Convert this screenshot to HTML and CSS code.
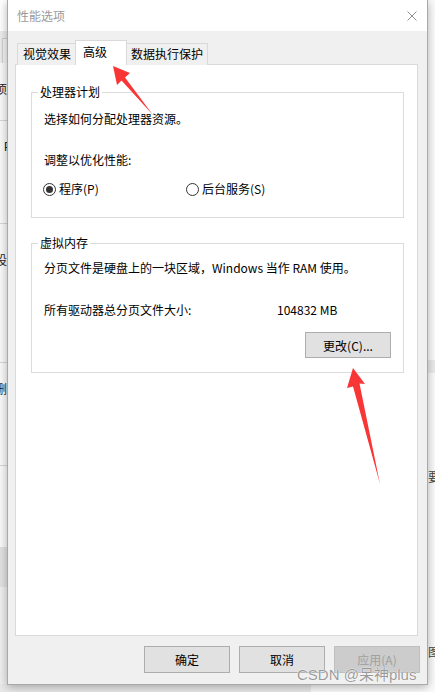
FILE: index.html
```html
<!DOCTYPE html>
<html lang="zh-CN">
<head>
<meta charset="utf-8">
<title>性能选项</title>
<link rel="stylesheet" href="styles.css">
</head>
<body>
<div class="screen">
  <div class="backdrop">
    <div class="bd bd-left-top"></div>
    <div class="bd bd-left-head"></div>
    <div class="bd bd-left-tab"></div>
    <div class="bd bd-left-body"></div>
    <div class="bd bd-line bd-line-1"></div>
    <div class="bd bd-line bd-line-2"></div>
    <div class="bd bd-line bd-line-3"></div>
    <div class="bd bd-line bd-line-4"></div>
    <div class="bd bd-left-band"></div>
    <div class="bd bd-left-foot"></div>
    <div class="bd bd-right-band"></div>
    <div class="bd bd-bottom-left"></div>
    <span class="bd bd-char ch-1">项</span>
    <span class="bd bd-char ch-2">P</span>
    <span class="bd bd-char ch-3">设</span>
    <span class="bd bd-char ch-4">删</span>
    <span class="bd bd-char ch-5">要</span>
    <span class="bd bd-char ch-6">图</span>
  </div>

  <div class="dialog">
    <div class="titlebar">
      <span class="title">性能选项</span>
      <svg class="close" viewBox="0 0 10 10" width="10" height="10" aria-hidden="true">
        <path d="M0.5 0.5 L9.5 9.5 M9.5 0.5 L0.5 9.5" stroke="#8e8e8e" stroke-width="1" fill="none"/>
      </svg>
    </div>
    <div class="tabs">
      <div class="tab tab-1">视觉效果</div>
      <div class="tab tab-2">高级</div>
      <div class="tab tab-3">数据执行保护</div>
    </div>
    <div class="panel">
      <fieldset class="group group-cpu">
        <legend>处理器计划</legend>
        <p class="line">选择如何分配处理器资源。</p>
        <p class="line line-gap">调整以优化性能:</p>
        <div class="radios">
          <label class="radio r1"><span class="dot checked"></span>程序(P)</label>
          <label class="radio r2"><span class="dot"></span>后台服务(S)</label>
        </div>
      </fieldset>
      <fieldset class="group group-vm">
        <legend>虚拟内存</legend>
        <p class="line">分页文件是硬盘上的一块区域，Windows 当作 RAM 使用。</p>
        <div class="line size-row"><span class="size-label">所有驱动器总分页文件大小:</span><span>104832 MB</span></div>
        <div class="btn-row"><button class="btn btn-change">更改(C)...</button></div>
      </fieldset>
    </div>
    <div class="footer">
      <button class="btn">确定</button>
      <button class="btn">取消</button>
      <button class="btn disabled">应用(A)</button>
    </div>
  </div>

  <svg class="arrows" viewBox="0 0 435 692" width="435" height="692" aria-hidden="true">
    <polygon points="113,66 117,85 121.5,80.5 153,115 125,77.5 130,73" fill="#f93636"/>
    <polygon points="353,368 365,384 359.5,383.5 380,484 353,386.5 347,388" fill="#f93636"/>
  </svg>
  <div class="watermark">CSDN @呆神plus</div>
</div>
</body>
</html>
```

FILE: styles.css
```css
* { box-sizing: border-box; }

html, body {
  margin: 0;
  padding: 0;
}

body {
  width: 435px;
  height: 692px;
  overflow: hidden;
  font-family: "Noto Sans CJK SC", "Noto Sans", sans-serif;
  font-size: 12px;
  color: #000;
}

.screen {
  position: relative;
  width: 435px;
  height: 692px;
  overflow: hidden;
  background: #fbfbfb;
}

/* window behind the dialog */
.backdrop { position: absolute; inset: 0; }
.bd { position: absolute; }
.bd-left-top { left: 0; top: 0; width: 8px; height: 31px; background: #ffffff; }
.bd-left-head { left: 0; top: 31px; width: 8px; height: 32px; background: #ececec; }
.bd-left-tab { left: 2px; top: 38px; width: 10px; height: 26px; border: 1px solid #cfcfcf; background: #f4f4f4; }
.bd-left-body { left: 0; top: 63px; width: 8px; height: 484px; background: #fafafa; }
.bd-line { left: 0; width: 8px; height: 1px; background: #d6d6d6; }
.bd-line-1 { top: 120px; }
.bd-line-2 { top: 223px; }
.bd-line-3 { top: 362px; }
.bd-line-4 { top: 465px; }
.bd-left-band { left: 0; top: 547px; width: 8px; height: 40px; background: #e2e2e2; }
.bd-left-foot { left: 0; top: 587px; width: 8px; height: 105px; background: #efefef; }
.bd-right-band { left: 428px; top: 360px; width: 7px; height: 13px; background: #ebebeb; }
.bd-bottom-left { left: 0; top: 684px; width: 311px; height: 8px; background: #e9e9e9; }
.bd-char { line-height: 16px; color: #222; }
.ch-1 { left: -5px; top: 81px; }
.ch-2 { left: 4px; top: 139px; font-family: "Liberation Sans", sans-serif; }
.ch-3 { left: -5px; top: 252px; }
.ch-4 { left: -5px; top: 381px; }
.ch-5 { left: 428px; top: 469px; color: #444; }
.ch-6 { left: 428px; top: 644px; color: #444; }

/* dialog */
.dialog {
  position: relative;
  z-index: 1;
  margin-left: 7px;
  width: 421px;
  height: 685px;
  border: 1px solid #a9a9a9;
  border-top: none;
  background: #f0f0f0;
  box-shadow: 0 2px 9px rgba(0, 0, 0, 0.3);
  display: flex;
  flex-direction: column;
}

.titlebar {
  height: 31px;
  flex: none;
  background: #fff;
  display: flex;
  align-items: center;
  justify-content: space-between;
  padding: 0 10px 0 9px;
}

.title {
  color: #9a9a9a;
  line-height: 31px;
}

.close { display: block; margin-top: 1px; }

.tabs {
  position: relative;
  z-index: 2;
  display: flex;
  align-items: flex-end;
  height: 25px;
  flex: none;
  margin: 9px 0 -1px 9px;
}

.tab {
  height: 22px;
  border: 1px solid #d9d9d9;
  border-bottom: none;
  background: #f0f0f0;
  line-height: 20px;
  padding-left: 5px;
  white-space: nowrap;
}

.tab-1 { width: 59px; }

.tab-2 {
  position: relative;
  z-index: 1;
  width: 52px;
  height: 25px;
  margin-left: -1px;
  padding-left: 7px;
  background: #fff;
  line-height: 21px;
}

.tab-3 {
  width: 82px;
  margin-left: -1px;
  padding-left: 4px;
}

.panel {
  display: flow-root;
  flex: none;
  margin-left: 7px;
  width: 403px;
  height: 572px;
  background: #fff;
  border: 1px solid #d9d9d9;
}

.group {
  margin: 0 0 0 15px;
  width: 373px;
  min-width: 0;
  border: 1px solid #dcdcdc;
  padding: 0 12px;
}

.group legend {
  padding: 0 2px;
  margin-left: -6px;
  line-height: 16px;
}

.group-cpu { margin-top: 19px; padding-top: 11px; padding-bottom: 20px; }
.group-vm { margin-top: 17px; padding-top: 9px; padding-bottom: 14px; }

.line {
  margin: 0;
  line-height: 16px;
  white-space: nowrap;
}

.line-gap { margin-top: 25px; }

.radios {
  display: flex;
  align-items: center;
  height: 16px;
  margin-top: 13px;
}

.radio {
  display: flex;
  align-items: center;
  gap: 3px;
  line-height: 16px;
}

.r1 { width: 143px; margin-left: -1px; }

.dot {
  width: 13px;
  height: 13px;
  border: 1px solid #333;
  border-radius: 50%;
  background: #fff;
  display: flex;
  align-items: center;
  justify-content: center;
}

.dot.checked::after {
  content: "";
  width: 7px;
  height: 7px;
  border-radius: 50%;
  background: #333;
}

.size-row { display: flex; margin-top: 26px; }
.size-label { width: 233px; }

.btn-row {
  display: flex;
  justify-content: flex-end;
  margin-top: 14px;
}

.btn {
  width: 86px;
  height: 27px;
  padding: 0;
  background: #e1e1e1;
  border: 1px solid #adadad;
  border-radius: 0;
  font: inherit;
  color: #000;
}

.btn-change { height: 26px; }

.btn.disabled {
  background: #cccccc;
  border-color: #bfbfbf;
  color: #a0a0a0;
}

.footer {
  display: flex;
  justify-content: flex-end;
  gap: 9px;
  padding: 10px 7px 0 0;
}

.arrows {
  position: absolute;
  left: 0;
  top: 0;
  z-index: 3;
  pointer-events: none;
}

.watermark {
  position: absolute;
  left: 297px;
  top: 666px;
  z-index: 3;
  font-family: "Liberation Sans", "Noto Sans CJK SC", sans-serif;
  font-size: 15px;
  line-height: 18px;
  color: rgba(120, 120, 120, 0.75);
  text-shadow: 0 0 1px #fff, 0 0 1px #fff;
  white-space: nowrap;
}
```
